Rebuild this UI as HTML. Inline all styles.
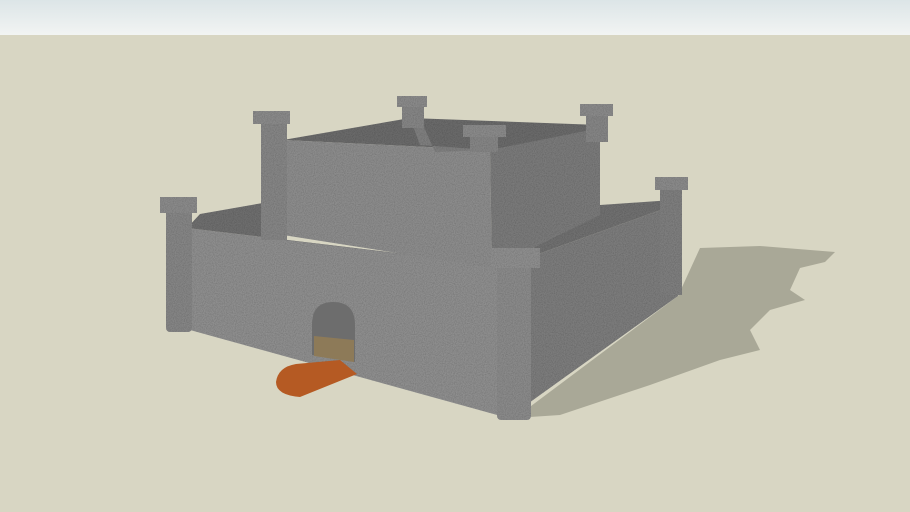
<!DOCTYPE html>
<html><head><meta charset="utf-8"><style>
html,body{margin:0;padding:0;width:910px;height:512px;overflow:hidden;background:#d8d6c3}
svg{display:block}
</style></head><body>
<svg width="910" height="512" viewBox="0 0 910 512" xmlns="http://www.w3.org/2000/svg">
<defs>
<linearGradient id="sky" x1="0" y1="0" x2="0" y2="1"><stop offset="0" stop-color="#dce5e7"/><stop offset="1" stop-color="#f2f4f3"/></linearGradient>
<filter id="n"><feTurbulence type="fractalNoise" baseFrequency="0.9" numOctaves="2" result="t"/><feColorMatrix in="t" type="matrix" values="0 0 0 0 0.5 0 0 0 0 0.5 0 0 0 0 0.5 0 0 0 1.2 -0.4" result="g"/><feComposite in="g" in2="SourceGraphic" operator="in" result="m"/><feBlend in="SourceGraphic" in2="m" mode="multiply"/></filter>
</defs>
<rect width="910" height="35" fill="url(#sky)"/>
<rect y="35" width="910" height="477" fill="#d8d6c3"/>
<polygon points="515,418 678,296 700,248 760,246 835,252 825,262 800,268 790,290 805,300 770,310 750,330 760,350 720,360 650,385 560,415" fill="#a9a897"/>
<g filter="url(#n)">
<polygon points="187,228 505,266 508,418 190,330" fill="#8e8e8e"/>
<polygon points="505,266 672,206 678,296 508,418" fill="#7c7c7c"/>
<polygon points="187,228 200,214 280,200 285,240 505,266" fill="#6e6e6e"/>
<polygon points="505,266 600,205 672,200 672,206" fill="#707070"/>
<polygon points="283,140 410,118 600,125 600,130 490,150" fill="#6a6a6a"/>
<polygon points="283,140 490,150 492,268 283,235" fill="#8c8c8c"/>
<polygon points="490,150 600,128 600,215 492,268" fill="#7a7a7a"/>
<polygon points="410,118 420,118 435,152 490,150 420,145" fill="#7f7f7f"/>
<rect x="166" y="205" width="26" height="127" rx="4" fill="#858585"/>
<rect x="160" y="197" width="37" height="16" fill="#8a8a8a"/>
<rect x="261" y="120" width="26" height="120" fill="#858585"/>
<rect x="253" y="111" width="37" height="13" fill="#8a8a8a"/>
<rect x="402" y="103" width="22" height="25" fill="#858585"/>
<rect x="397" y="96" width="30" height="11" fill="#8a8a8a"/>
<rect x="586" y="112" width="22" height="30" fill="#858585"/>
<rect x="580" y="104" width="33" height="12" fill="#8a8a8a"/>
<rect x="470" y="132" width="28" height="20" fill="#858585"/>
<rect x="463" y="125" width="43" height="12" fill="#8a8a8a"/>
<rect x="660" y="185" width="22" height="110" fill="#7e7e7e"/>
<rect x="655" y="177" width="33" height="13" fill="#8a8a8a"/>
<rect x="497" y="260" width="34" height="160" rx="4" fill="#8a8a8a"/>
<rect x="491" y="248" width="49" height="20" fill="#8e8e8e"/>
</g>
<path d="M312,355 L312,325 Q312,302 333,302 Q355,302 355,325 L355,362 Z" fill="#6d6d6d"/>
<path d="M314,336 L354,340 L354,362 L314,356 Z" fill="#8d7a58"/>
<path d="M296,364 L340,360 L357,374 L300,397 Q276,395 276,382 Q278,367 296,364 Z" fill="#b55a23"/>
</svg>
</body></html>
